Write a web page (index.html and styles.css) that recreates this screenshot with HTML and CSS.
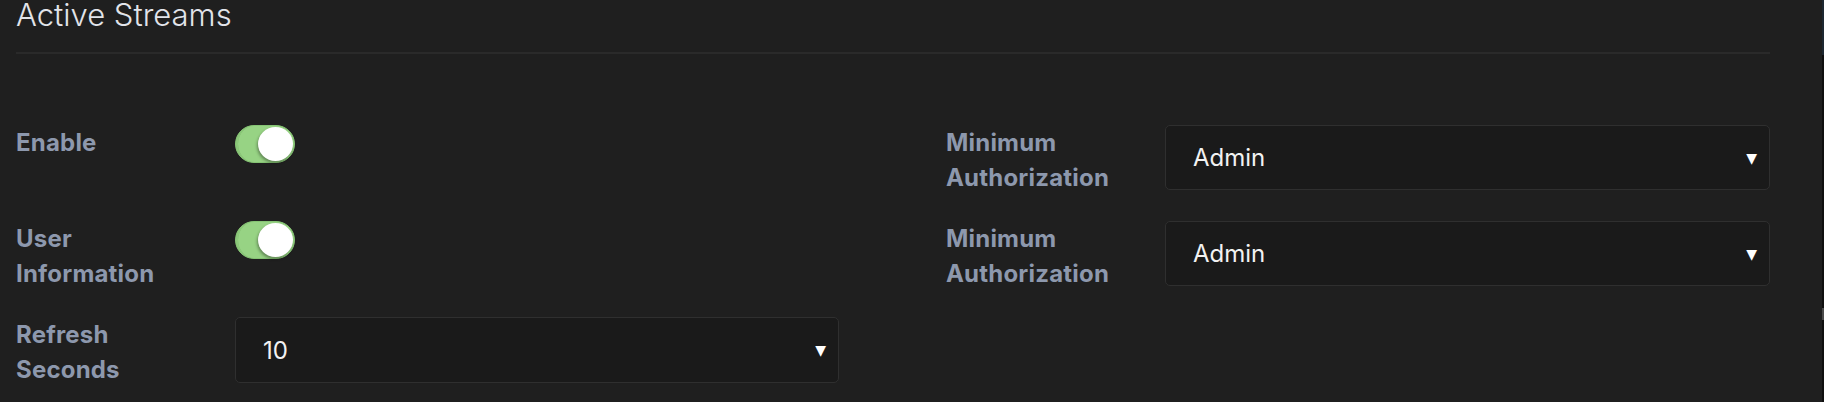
FILE: index.html
```html
<!DOCTYPE html>
<html lang="en">
<head>
<meta charset="utf-8">
<title>Active Streams</title>
<link rel="stylesheet" href="styles.css">
</head>
<body>
<div class="page">
  <main class="panel">
    <header class="panel-head">
      <h1 class="title">Active Streams</h1>
    </header>
    <div class="form">
      <div class="col col-left">
        <div class="row">
          <label class="label">Enable</label>
          <div class="control"><span class="toggle on"><span class="knob"></span></span></div>
        </div>
        <div class="row">
          <label class="label">User<br>Information</label>
          <div class="control"><span class="toggle on"><span class="knob"></span></span></div>
        </div>
        <div class="row">
          <label class="label">Refresh<br>Seconds</label>
          <div class="control"><div class="select"><span class="value">10</span><span class="caret">▼</span></div></div>
        </div>
      </div>
      <div class="col col-right">
        <div class="row">
          <label class="label">Minimum<br>Authorization</label>
          <div class="control"><div class="select"><span class="value">Admin</span><span class="caret">▼</span></div></div>
        </div>
        <div class="row">
          <label class="label">Minimum<br>Authorization</label>
          <div class="control"><div class="select"><span class="value">Admin</span><span class="caret">▼</span></div></div>
        </div>
      </div>
    </div>
  </main>
  <div class="edge"><span class="edge-thumb"></span></div>
</div>
</body>
</html>
```

FILE: styles.css
```css
* { box-sizing: border-box; }
html, body { margin: 0; padding: 0; }
body {
  background: #1f1f1f;
  font-family: Inter, "Noto Sans", sans-serif;
  overflow: hidden;
}
.page {
  display: flex;
  height: 402px;
}
.panel {
  flex: 1;
  padding: 0 0 0 16px;
}
.panel-head {
  width: 1754px;
  border-bottom: 2px solid #2a2a2a;
  height: 54px;
}
.title {
  margin: 0;
  font-size: 31px;
  font-weight: 300;
  line-height: 30px;
  color: #e2e4ea;
}
.form {
  display: flex;
  margin-top: 71px;
}
.col { display: flex; flex-direction: column; gap: 26px; }
.col-left { width: 823px; }
.col-right { width: 824px; margin-left: 107px; }
.row {
  display: flex;
  align-items: flex-start;
  height: 70px;
}
.label {
  flex: none;
  width: 219px;
  font-size: 24px;
  font-weight: 700;
  line-height: 35px;
  letter-spacing: 0.2px;
  color: #8d98ad;
}
.control { flex: 1; }
.toggle {
  display: block;
  position: relative;
  width: 60px;
  height: 38px;
  border-radius: 19px;
  background: #97d384;
  border: 1px solid #86c474;
  box-shadow: inset 3px 0 0 -1px #8cc87a, inset 4px 0 0 -2px #7fb76d;
}
.knob {
  position: absolute;
  top: 1px;
  right: 1px;
  width: 35px;
  height: 34px;
  border-radius: 50%;
  background: #ffffff;
  box-shadow: -1px 2px 3px rgba(0,0,0,0.35);
}
.select {
  display: flex;
  align-items: center;
  justify-content: space-between;
  height: 66px;
  padding: 0 12px 0 27px;
  background: #1a1a1a;
  border: 1px solid #2f2f2f;
  border-radius: 5px;
  color: #f2f2f2;
  font-size: 24px;
  font-weight: 400;
}
.col-right .select { height: 65px; }
.caret {
  font-size: 14px;
  color: #ffffff;
  font-family: "DejaVu Sans", sans-serif;
}
.edge {
  position: relative;
  width: 2px;
  background: linear-gradient(#1d2731 0, #1d2731 55px, #0f0f0f 55px);
}
.edge-thumb {
  position: absolute;
  left: 0;
  top: 308px;
  width: 2px;
  height: 12px;
  background: #4a4a4a;
}
```
